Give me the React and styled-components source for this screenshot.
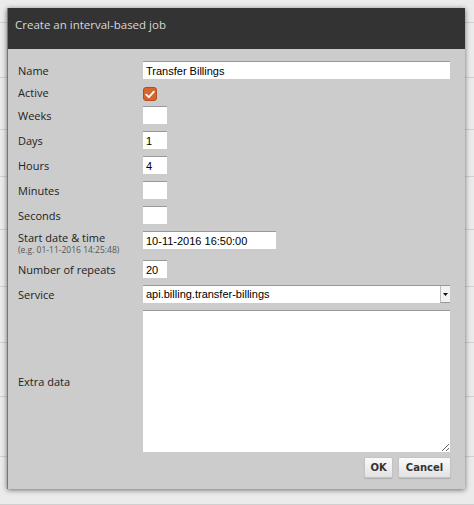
import styled, { createGlobalStyle } from "styled-components";

const Global = createGlobalStyle`
  html, body {
    margin: 0;
    padding: 0;
    background: #ebebeb;
  }
  #root {
    position: relative;
    width: 474px;
    height: 505px;
    overflow: hidden;
  }
`;

const Backdrop = styled.div`
  display: flex;
  flex-direction: column;
`;

const BackRow = styled.div`
  height: ${(p) => p.h}px;
  border-bottom: 1px solid #cfcfcf;
  box-sizing: border-box;
`;

const Dialog = styled.div`
  position: absolute;
  left: 7px;
  top: 8px;
  width: 458px;
  height: 481px;
  display: flex;
  flex-direction: column;
  background: #cccccc;
  box-shadow: 0 1px 5px rgba(0, 0, 0, 0.55);
  border-left: 1px solid #777;
  box-sizing: border-box;
`;

const Header = styled.div`
  height: 41px;
  flex: none;
  background: #333333;
  color: #d8d8d8;
  font-family: "Open Sans", "DejaVu Sans", sans-serif;
  font-size: 11.5px;
  padding: 9px 0 0 7px;
  box-sizing: border-box;
`;

const Body = styled.form`
  display: grid;
  grid-template-columns: 125px 1fr;
  row-gap: 7px;
  padding: 12px 14px 0 10px;
  margin: 0;
`;

const Label = styled.label`
  font-family: "Open Sans", "DejaVu Sans", sans-serif;
  font-size: 11px;
  color: #222;
  display: flex;
  flex-direction: column;
  justify-content: ${(p) => (p.top ? "flex-start" : "center")};
  line-height: 13px;
  height: ${(p) => (p.h ? p.h + "px" : "auto")};
`;

const Hint = styled.span`
  font-size: 8.5px;
  color: #555;
  line-height: 11px;
`;

const Field = styled.div`
  display: flex;
  align-items: flex-start;
  height: ${(p) => p.h}px;
`;

const Input = styled.input`
  width: ${(p) => p.w}px;
  height: 18px;
  box-sizing: border-box;
  border: none;
  border-top: 1px solid #999;
  background: #fff;
  font-family: "Liberation Sans", Arial, sans-serif;
  font-size: 11px;
  color: #000;
  padding: 1px 3px 0;
  margin: 0;
  outline: none;
`;

const Check = styled.span`
  width: 14px;
  height: 14px;
  margin-top: 1px;
  border-radius: 3px;
  background: #d8642f;
  border: 1px solid #b34d22;
  box-sizing: border-box;
  display: flex;
  align-items: center;
  justify-content: center;
`;

const SelectBox = styled.div`
  position: relative;
  width: 307px;
  height: 18px;
  box-sizing: border-box;
  background: #fff;
  border-top: 1px solid #999;
  font-family: "Liberation Sans", Arial, sans-serif;
  font-size: 11px;
  color: #000;
  padding: 2px 3px 0;
`;

const Arrow = styled.span`
  position: absolute;
  right: 0;
  top: 0;
  width: 9px;
  height: 16px;
  border-left: 1px solid #bbb;
  border-bottom: 1px solid #999;
  background: #f2f2f2;
  display: flex;
  align-items: center;
  justify-content: center;
`;

const TextArea = styled.textarea`
  width: 307px;
  height: 142px;
  box-sizing: border-box;
  border: none;
  border-top: 1px solid #999;
  background: #fff;
  margin: 0;
  padding: 2px;
  outline: none;
  resize: both;
`;

const Buttons = styled.div`
  grid-column: 1 / 3;
  display: flex;
  justify-content: flex-end;
  gap: 5px;
  margin-top: -2px;
`;

const Button = styled.button`
  height: 21px;
  width: ${(p) => p.w}px;
  padding: 0;
  border: 1px solid #c4c4c4;
  border-radius: 2px;
  background: linear-gradient(#fafafa, #e2e2e2);
  box-shadow: 0 1px 1px rgba(0, 0, 0, 0.15);
  font-family: "DejaVu Sans", Verdana, sans-serif;
  font-weight: bold;
  font-size: 10px;
  color: #333;
`;

const rows = [
  { label: "Weeks", value: "" },
  { label: "Days", value: "1" },
  { label: "Hours", value: "4" },
  { label: "Minutes", value: "" },
  { label: "Seconds", value: "" },
];

const backRows = [23, 55, 52, 47, 53, 57, 56, 54, 60, 48];

export default function App() {
  return (
    <>
      <Global />
      <Backdrop>
        {backRows.map((h, i) => (
          <BackRow key={i} h={h} />
        ))}
      </Backdrop>
      <Dialog>
        <Header>Create an interval-based job</Header>
        <Body onSubmit={(e) => e.preventDefault()}>
          <Label h={18}>Name</Label>
          <Field h={18}>
            <Input w={307} defaultValue="Transfer Billings" />
          </Field>

          <Label h={13}>Active</Label>
          <Field h={13}>
            <Check>
              <svg width="10" height="9" viewBox="0 0 10 9">
                <path d="M1.2 4.6 L3.9 7.2 L8.8 1.6" fill="none" stroke="#fff" strokeWidth="1.8" strokeLinecap="round" strokeLinejoin="round" />
              </svg>
            </Check>
          </Field>

          {rows.map((r) => [
            <Label key={r.label + "l"} h={18}>{r.label}</Label>,
            <Field key={r.label + "f"} h={18}>
              <Input w={24} defaultValue={r.value} />
            </Field>,
          ])}

          <Label h={22} top>
            Start date &amp; time
            <Hint>(e.g. 01-11-2016 14:25:48)</Hint>
          </Label>
          <Field h={22}>
            <Input w={133} defaultValue="10-11-2016 16:50:00" />
          </Field>

          <Label h={18}>Number of repeats</Label>
          <Field h={18}>
            <Input w={24} defaultValue="20" />
          </Field>

          <Label h={18}>Service</Label>
          <Field h={18}>
            <SelectBox>
              api.billing.transfer-billings
              <Arrow>
                <svg width="5" height="3" viewBox="0 0 5 3">
                  <path d="M0 0 H5 L2.5 3 Z" fill="#111" />
                </svg>
              </Arrow>
            </SelectBox>
          </Field>

          <Label h={142}>Extra data</Label>
          <Field h={142}>
            <TextArea />
          </Field>

          <Buttons>
            <Button w={29} type="submit">OK</Button>
            <Button w={53} type="button">Cancel</Button>
          </Buttons>
        </Body>
      </Dialog>
    </>
  );
}
